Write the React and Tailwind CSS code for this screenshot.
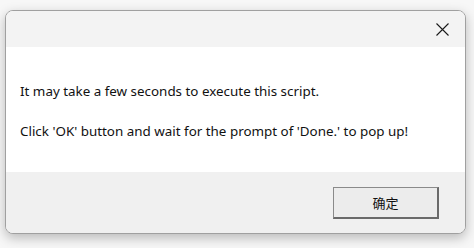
export default function App() {
  return (
    <div className="w-[474px] h-[248px] bg-[#f7f7f7] pt-[10px] pl-[5px] overflow-hidden" style={{ fontFamily: '"Noto Sans", "Noto Sans CJK SC", sans-serif' }}>
      <div className="w-[461px] h-[224px] rounded-[8px] border border-[#a0a0a0] overflow-hidden flex flex-col shadow-[0_4px_12px_rgba(0,0,0,0.25)] bg-white">
        <div className="h-[36px] bg-[#f3f3f3] flex justify-end items-start">
          <div className="w-[46px] h-[36px] flex items-center justify-center">
            <svg width="13" height="13" viewBox="0 0 13 13">
              <path d="M0.5 0.5 L12.5 12.5 M12.5 0.5 L0.5 12.5" stroke="#1a1a1a" strokeWidth="1.1" fill="none" />
            </svg>
          </div>
        </div>
        <div className="h-[125px] bg-white pl-[14px] pt-[34px] text-[13.4px] leading-[20px] text-[#111]">
          <p>It may take a few seconds to execute this script.</p>
          <p className="mt-[20px]">Click 'OK' button and wait for the prompt of 'Done.' to pop up!</p>
        </div>
        <div className="flex-1 bg-[#f0f0f0] flex justify-end items-start pt-[15px] pr-[26px]">
          <button className="w-[106px] h-[32px] bg-[#ececec] border border-[#8a8a8a] border-r-2 border-b-2 border-r-[#6a6a6a] border-b-[#6a6a6a] text-[13px] text-[#111] flex items-center justify-center" style={{ fontFamily: '"Noto Sans CJK SC", sans-serif' }}>
            确定
          </button>
        </div>
      </div>
    </div>
  );
}
